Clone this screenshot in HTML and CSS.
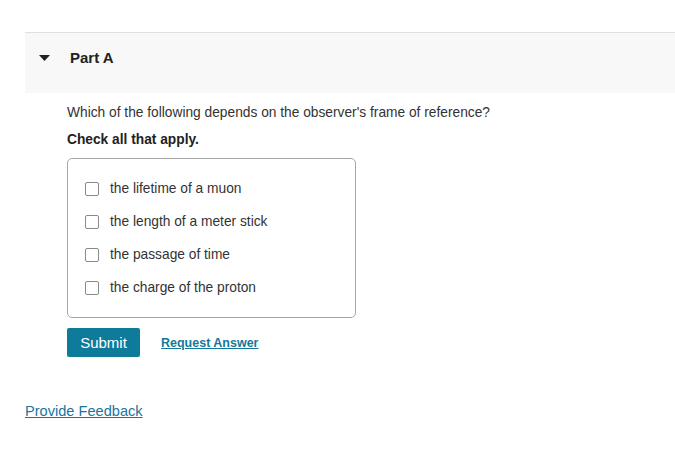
FILE: index.html
```html
<!DOCTYPE html>
<html>
<head>
<meta charset="utf-8">
<link rel="stylesheet" href="styles.css">
</head>
<body>
<div class="page">
  <section class="part">
    <div class="part-header">
      <svg class="caret" width="11" height="6" viewBox="0 0 11 6"><polygon points="0,0 11,0 5.5,6" fill="#222"/></svg>
      <h2 class="part-title">Part A</h2>
    </div>
    <div class="part-body">
      <p class="question">Which of the following depends on the observer's frame of reference?</p>
      <p class="instruction">Check all that apply.</p>
      <div class="options">
        <label class="option"><span class="box"></span><span>the lifetime of a muon</span></label>
        <label class="option"><span class="box"></span><span>the length of a meter stick</span></label>
        <label class="option"><span class="box"></span><span>the passage of time</span></label>
        <label class="option"><span class="box"></span><span>the charge of the proton</span></label>
      </div>
      <div class="actions">
        <button class="submit">Submit</button>
        <a class="request" href="#">Request Answer</a>
      </div>
    </div>
  </section>
  <a class="feedback" href="#">Provide Feedback</a>
</div>
</body>
</html>
```
FILE: styles.css
```css
* { box-sizing: border-box; }
body {
  margin: 0;
  background: #fff;
  font-family: "Liberation Sans", Arial, sans-serif;
  color: #333;
}
.page {
  padding: 32px 0 0 25px;
}
.part-header {
  display: flex;
  align-items: flex-start;
  height: 61px;
  border-top: 1px solid #e0e0e0;
  background: #f8f8f8;
  padding: 16px 0 0 14px;
}
.caret { display: block; margin-top: 6px; }
.part-title {
  margin: 0 0 0 20px;
  font-size: 15px;
  line-height: 17px;
  font-weight: bold;
  color: #222;
}
.part-body {
  padding-left: 42px;
}
.question {
  margin: 11px 0 0;
  font-size: 13.75px;
  line-height: 17px;
}
.instruction {
  margin: 10px 0 0;
  font-size: 13.75px;
  line-height: 17px;
  font-weight: bold;
  color: #222;
}
.options {
  margin-top: 10px;
  width: 289px;
  border: 1px solid #a6a6a6;
  border-radius: 5px;
  padding: 13px 17px;
}
.option {
  display: flex;
  align-items: center;
  height: 33px;
  font-size: 13.75px;
}
.box {
  width: 14px;
  height: 14px;
  border: 1px solid #8a8a8a;
  border-radius: 2px;
  margin-right: 11px;
  background: #fff;
}
.actions {
  display: flex;
  align-items: center;
  margin-top: 10px;
}
.submit {
  width: 73px;
  height: 29px;
  background: #0f7b9b;
  color: #fff;
  border: 0;
  border-radius: 2px;
  font-family: "Liberation Sans", Arial, sans-serif;
  font-size: 15px;
  padding: 0;
}
.request {
  margin-left: 21px;
  font-size: 12.5px;
  font-weight: bold;
  color: #15789a;
  text-decoration: underline;
}
.feedback {
  display: inline-block;
  margin-top: 46px;
  font-size: 14.6px;
  color: #1a74a0;
  text-decoration: underline;
}
```
